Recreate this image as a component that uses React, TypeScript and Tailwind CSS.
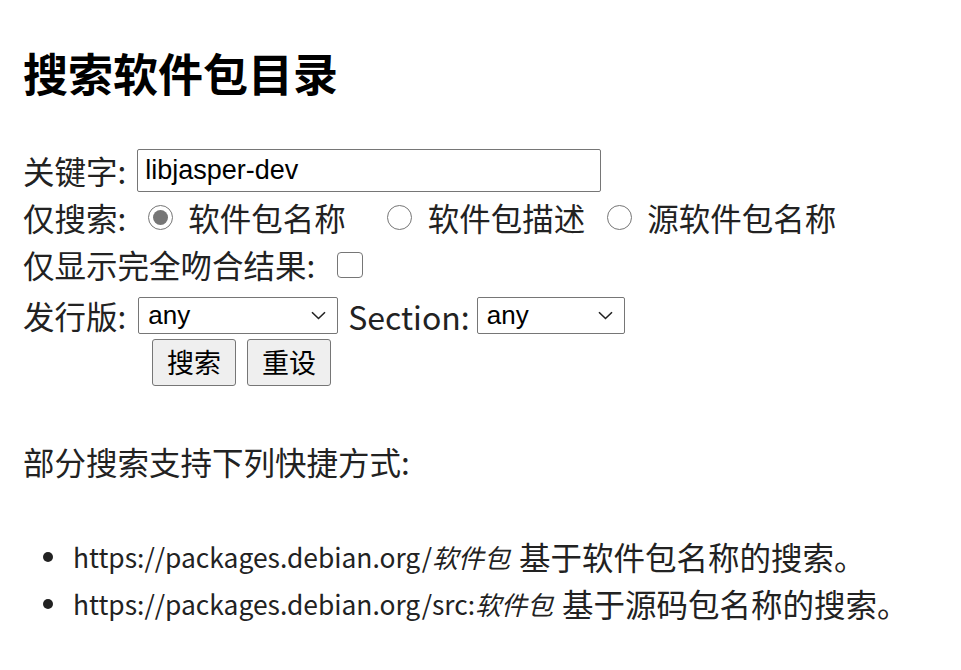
const Radio = ({ checked = false }: { checked?: boolean }) => (
  <span className="flex h-[25px] w-[25px] shrink-0 items-center justify-center rounded-full border border-[#767676] bg-white">
    {checked && <span className="h-[15px] w-[15px] rounded-full bg-[#767676]" />}
  </span>
);

const Chevron = () => (
  <svg width="15" height="9" viewBox="0 0 15 9" fill="none">
    <path d="M1 1.2l6.5 6.3L14 1.2" stroke="#222" strokeWidth="1.6" />
  </svg>
);

const Select = ({ width }: { width: string }) => (
  <div
    className={`flex h-[37px] items-center justify-between rounded-[2px] border border-[#767676] bg-white pl-[9px] pr-[11px] font-['Liberation_Sans',Arial,sans-serif] text-[26px] text-black ${width}`}
  >
    <span>any</span>
    <Chevron />
  </div>
);

export default function App() {
  return (
    <div className="min-h-[670px] bg-white px-[23px] font-['Noto_Sans_CJK_SC',sans-serif] text-[31.5px] text-[#222]">
      <h1 className="pt-[50px] text-[45px] leading-[46px] font-bold text-black">搜索软件包目录</h1>

      <form className="mt-[53px]" onSubmit={(e) => e.preventDefault()}>
        {/* 关键字 */}
        <div className="flex h-[43px] items-center">
          <span>关键字:</span>
          <input
            type="text"
            defaultValue="libjasper-dev"
            className="ml-[11px] h-[43px] w-[464px] rounded-[2px] border border-[#767676] px-[7px] font-['Liberation_Sans',Arial,sans-serif] text-[27px] text-black outline-none"
          />
        </div>

        {/* 仅搜索 */}
        <div className="flex h-[51px] items-center">
          <span>仅搜索:</span>
          <span className="ml-[22px]"><Radio checked /></span>
          <span className="ml-[15px]">软件包名称</span>
          <span className="ml-[41px]"><Radio /></span>
          <span className="ml-[16px]">软件包描述</span>
          <span className="ml-[22px]"><Radio /></span>
          <span className="ml-[15px]">源软件包名称</span>
        </div>

        {/* 完全吻合 */}
        <div className="flex h-[43px] items-center">
          <span>仅显示完全吻合结果:</span>
          <span className="ml-[22px] h-[26px] w-[26px] rounded-[4px] border border-[#767676] bg-white" />
        </div>

        {/* 发行版 / Section */}
        <div className="mt-[11px] flex h-[37px] items-center">
          <span>发行版:</span>
          <div className="ml-[12px]">
            <Select width="w-[200px]" />
          </div>
          <span className="ml-[10px] text-[32px]">Section:</span>
          <div className="ml-[7px]">
            <Select width="w-[148px]" />
          </div>
        </div>

        <div className="mt-[5px] ml-[129px] flex gap-[11px]">
          <button
            type="submit"
            className="h-[47px] w-[84px] rounded-[3px] border border-[#767676] bg-[#efefef] text-[27px] text-black"
          >
            搜索
          </button>
          <button
            type="reset"
            className="h-[47px] w-[84px] rounded-[3px] border border-[#767676] bg-[#efefef] text-[27px] text-black"
          >
            重设
          </button>
        </div>
      </form>

      <p className="mt-[52px] leading-[47px]">部分搜索支持下列快捷方式:</p>

      <ul className="mt-[48px]">
        <li className="flex h-[47px] items-center whitespace-nowrap">
          <span className="mr-[20px] ml-[20px] h-[10px] w-[10px] shrink-0 rounded-full bg-[#222]" />
          <span className="text-[26.4px]">https://packages.debian.org/</span>
          <em className="shrink-0 text-[26px]">软件包</em>
          <span className="ml-[9px]">基于软件包名称的搜索。</span>
        </li>
        <li className="flex h-[47px] items-center whitespace-nowrap">
          <span className="mr-[20px] ml-[20px] h-[10px] w-[10px] shrink-0 rounded-full bg-[#222]" />
          <span className="text-[26.4px]">https://packages.debian.org/src:</span>
          <em className="shrink-0 text-[26px]">软件包</em>
          <span className="ml-[9px]">基于源码包名称的搜索。</span>
        </li>
      </ul>
    </div>
  );
}
